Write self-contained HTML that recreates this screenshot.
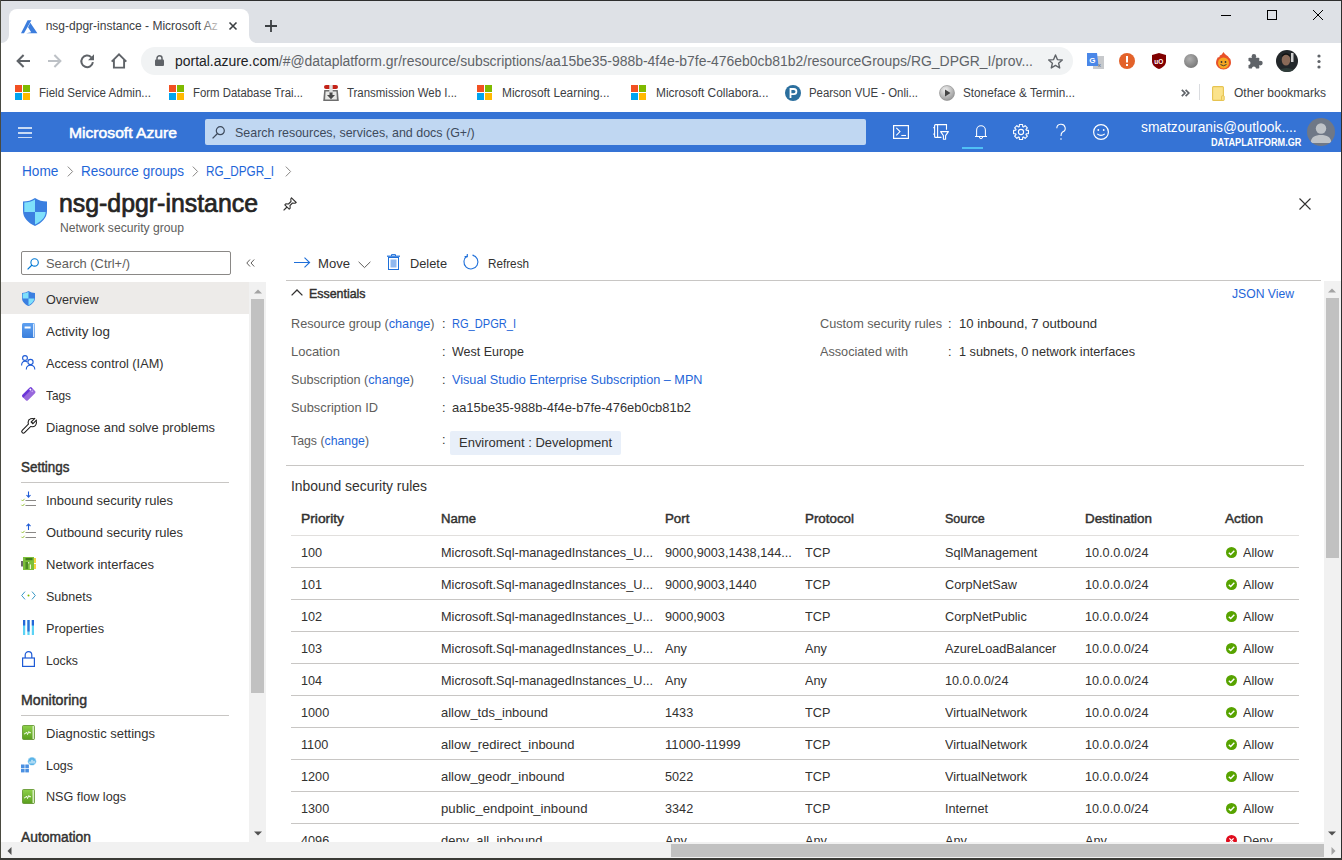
<!DOCTYPE html>
<html><head><meta charset="utf-8"><title>nsg-dpgr-instance - Microsoft Azure</title>
<style>
html,body{margin:0;padding:0;width:1342px;height:860px;overflow:hidden;background:#fff;}
body{position:relative;font-family:"Liberation Sans",sans-serif;}
.t{position:absolute;white-space:nowrap;}
.r{position:absolute;}
svg.r{overflow:visible;}
</style></head><body>
<div class="r" style="left:0px;top:0px;width:1342px;height:43px;background:#dee1e6;"></div>
<div class="r" style="left:9px;top:9px;width:240px;height:34px;background:#fff;border-radius:8px 8px 0 0;"></div>
<svg class="r" style="left:1px;top:35px" width="8" height="8" viewBox="0 0 8 8"><path d="M8 0 V8 H0 A8 8 0 0 0 8 0 Z" fill="#fff"/></svg>
<svg class="r" style="left:249px;top:35px" width="8" height="8" viewBox="0 0 8 8"><path d="M0 0 V8 H8 A8 8 0 0 1 0 0 Z" fill="#fff"/></svg>
<svg class="r" style="left:21px;top:20px" width="17" height="14" viewBox="0 0 17 14"><path d="M6.6 0.2 H10.4 L3 13.2 H0 Z" fill="#3b7ddd"/><path d="M9.3 2.8 L16.4 13.2 H5.2 L10.2 12.2 L7 7.2 Z" fill="#3b7ddd"/></svg>
<div class="t" style="left:45.7px;top:19.84px;font-size:12px;line-height:12px;color:#3c4043;">nsg-dpgr-instance - Microsoft Az</div>
<div class="r" style="left:200px;top:18px;width:24px;height:16px;background:linear-gradient(90deg,rgba(255,255,255,0),#fff);"></div>
<svg class="r" style="left:229px;top:22px" width="8" height="8" viewBox="0 0 8 8"><path d="M0.5 0.5 L7.5 7.5 M7.5 0.5 L0.5 7.5" stroke="#3c4043" stroke-width="1.6"/></svg>
<svg class="r" style="left:265px;top:20px" width="12" height="12" viewBox="0 0 12 12"><path d="M6 0 V12 M0 6 H12" stroke="#3c4043" stroke-width="1.8"/></svg>
<div class="r" style="left:1221px;top:15px;width:10px;height:1px;background:#000;"></div>
<div class="r" style="left:1267px;top:10px;width:10px;height:10px;background:transparent;border:1px solid #000;box-sizing:border-box;"></div>
<svg class="r" style="left:1313px;top:10px" width="10" height="10" viewBox="0 0 10 10"><path d="M0 0 L10 10 M10 0 L0 10" stroke="#000" stroke-width="1"/></svg>
<div class="r" style="left:0px;top:43px;width:1342px;height:69px;background:#fff;"></div>
<svg class="r" style="left:16px;top:54px" width="14" height="14" viewBox="0 0 14 14"><path d="M14 7 H1.8 M7.6 1 L1.6 7 L7.6 13" stroke="#5f6368" stroke-width="2" fill="none"/></svg>
<svg class="r" style="left:48px;top:54px" width="14" height="14" viewBox="0 0 14 14"><path d="M0 7 H12.2 M6.4 1 L12.4 7 L6.4 13" stroke="#bdc1c6" stroke-width="2" fill="none"/></svg>
<svg class="r" style="left:80px;top:54px" width="15" height="15" viewBox="0 0 15 15"><path d="M11.2 3.2 A5.8 5.8 0 1 0 12.9 8.2" stroke="#5f6368" stroke-width="2" fill="none"/><path d="M14 0.2 V6.2 H8 Z" fill="#5f6368"/></svg>
<svg class="r" style="left:111px;top:53px" width="16" height="16" viewBox="0 0 16 16"><path d="M2.9 6.8 V14.6 H13.1 V6.8" stroke="#5f6368" stroke-width="1.9" fill="none"/><path d="M0.7 8.6 L8 1.3 L15.3 8.6" stroke="#5f6368" stroke-width="1.9" fill="none"/></svg>
<div class="r" style="left:141px;top:47px;width:932px;height:28px;background:#f1f3f4;border-radius:14px;"></div>
<svg class="r" style="left:155px;top:55px" width="9" height="11" viewBox="0 0 9 11"><rect x="0" y="4.5" width="9" height="6.5" rx="1" fill="#5f6368"/><path d="M2 5 V3.2 A2.5 2.5 0 0 1 7 3.2 V5" stroke="#5f6368" stroke-width="1.5" fill="none"/></svg>
<div class="t" style="left:175.3px;top:54.35px;font-size:14px;line-height:14px;color:#5f6368;transform:scaleX(0.9951);transform-origin:0 0;"><span style="color:#202124">portal.azure.com</span>/#@dataplatform.gr/resource/subscriptions/aa15be35-988b-4f4e-b7fe-476eb0cb81b2/resourceGroups/RG_DPGR_I/prov...</div>
<svg class="r" style="left:1048px;top:54px" width="15" height="15" viewBox="0 0 15 15"><path d="M7.5 1 L9.4 5.6 L14.3 6 L10.6 9.2 L11.7 14 L7.5 11.4 L3.3 14 L4.4 9.2 L0.7 6 L5.6 5.6 Z" stroke="#5f6368" stroke-width="1.4" fill="none" stroke-linejoin="round"/></svg>
<svg class="r" style="left:1087px;top:53px" width="17" height="16" viewBox="0 0 17 16"><rect x="6" y="3" width="11" height="13" fill="#c7c9cc"/><path d="M0 0 H10 L11.5 13 H0 Z" fill="#4a87e8"/><text x="2.2" y="9.5" font-size="8" font-family="Liberation Sans" font-weight="bold" fill="#fff">G</text><text x="11" y="14" font-size="6" font-family="Liberation Sans" fill="#5f6368">x</text></svg>
<svg class="r" style="left:1119px;top:53px" width="16" height="16" viewBox="0 0 16 16"><circle cx="8" cy="8" r="8" fill="#e3622a"/><rect x="7" y="3" width="2" height="6.5" fill="#fff"/><rect x="7" y="11" width="2" height="2" fill="#fff"/></svg>
<svg class="r" style="left:1152px;top:53px" width="14" height="16" viewBox="0 0 14 16"><path d="M7 0 L14 2 V8 C14 12 11 14.5 7 16 C3 14.5 0 12 0 8 V2 Z" fill="#800000"/><text x="2.3" y="10.5" font-size="6.5" font-family="Liberation Sans" font-weight="bold" fill="#fff">uO</text></svg>
<svg class="r" style="left:1184px;top:54px" width="14" height="14" viewBox="0 0 14 14"><defs><radialGradient id="gg" cx="40%" cy="35%" r="65%"><stop offset="0" stop-color="#b0b0b0"/><stop offset="1" stop-color="#7a7a7a"/></radialGradient></defs><circle cx="7" cy="7" r="7" fill="url(#gg)"/></svg>
<svg class="r" style="left:1216px;top:52px" width="15" height="17" viewBox="0 0 15 17"><path d="M7.5 0 C9 3 13 4 13 6 C14.5 6 15 9 15 11 A7.5 6.5 0 0 1 0 11 C0 8 1.5 6 2 5 C3 6 3.5 5 4 3 C5 4 6 2 7.5 0 Z" fill="#e8512a"/><circle cx="7.5" cy="11" r="5.5" fill="#f6a723"/><circle cx="5.5" cy="10" r="0.9" fill="#333"/><circle cx="9.5" cy="10" r="0.9" fill="#333"/><path d="M4.5 12.5 Q7.5 15 10.5 12.5" stroke="#333" stroke-width="0.9" fill="none"/></svg>
<svg class="r" style="left:1248px;top:54px" width="15" height="15" viewBox="0 0 15 15"><rect x="0.5" y="3.8" width="10.8" height="10.7" rx="0.8" fill="#5f6368"/><circle cx="5.9" cy="2.4" r="2.3" fill="#5f6368"/><circle cx="12.4" cy="9.1" r="2.3" fill="#5f6368"/><circle cx="0.5" cy="9.1" r="2" fill="#fff"/><circle cx="5.9" cy="14.6" r="2" fill="#fff"/></svg>
<svg class="r" style="left:1276px;top:50px" width="22" height="22" viewBox="0 0 22 22"><defs><clipPath id="avc"><circle cx="11" cy="11" r="11"/></clipPath></defs><g clip-path="url(#avc)"><rect width="22" height="22" fill="#23272a"/><ellipse cx="10" cy="10" rx="4.3" ry="5.6" fill="#8a6a58"/><path d="M5.5 7 Q10 2 14.5 7 L14 5 Q10 1.5 6 5 Z" fill="#111"/><rect x="15" y="3" width="2.5" height="9" fill="#cfcfcf"/><path d="M1 22 Q10 14 21 22 Z" fill="#2f3d3a"/></g></svg>
<svg class="r" style="left:1317px;top:54px" width="4" height="15" viewBox="0 0 4 15"><circle cx="2" cy="2" r="1.6" fill="#5f6368"/><circle cx="2" cy="7.5" r="1.6" fill="#5f6368"/><circle cx="2" cy="13" r="1.6" fill="#5f6368"/></svg>
<svg class="r" style="left:15px;top:85px" width="15" height="15" viewBox="0 0 15 15"><rect x="0" y="0" width="7" height="7" fill="#f25022"/><rect x="8" y="0" width="7" height="7" fill="#7fba00"/><rect x="0" y="8" width="7" height="7" fill="#00a4ef"/><rect x="8" y="8" width="7" height="7" fill="#ffb900"/></svg>
<div class="t" style="left:39px;top:86.84px;font-size:12px;line-height:12px;color:#3c4043;transform:scaleX(0.9651);transform-origin:0 0;">Field Service Admin...</div>
<svg class="r" style="left:169px;top:85px" width="15" height="15" viewBox="0 0 15 15"><rect x="0" y="0" width="7" height="7" fill="#f25022"/><rect x="8" y="0" width="7" height="7" fill="#7fba00"/><rect x="0" y="8" width="7" height="7" fill="#00a4ef"/><rect x="8" y="8" width="7" height="7" fill="#ffb900"/></svg>
<div class="t" style="left:193px;top:86.84px;font-size:12px;line-height:12px;color:#3c4043;transform:scaleX(0.9479);transform-origin:0 0;">Form Database Trai...</div>
<svg class="r" style="left:323px;top:85px" width="16" height="16" viewBox="0 0 16 16"><path d="M1.2 5 H14.8 L15.8 16 H0.2 Z" fill="#6e6e6e"/><path d="M2.6 6.6 H13.4 L13.9 14.4 H2.1 Z" fill="#e8e8e6"/><path d="M6.5 7 H9.5 V10 H12 L8 14.2 L4 10 H6.5 Z" fill="#4a4a4a"/><rect x="1" y="0" width="14" height="4" rx="2" fill="#c42318"/><rect x="6.3" y="0" width="3.4" height="7.5" fill="#e0e0e0"/></svg>
<div class="t" style="left:347px;top:86.84px;font-size:12px;line-height:12px;color:#3c4043;transform:scaleX(0.9534);transform-origin:0 0;">Transmission Web I...</div>
<svg class="r" style="left:477px;top:85px" width="15" height="15" viewBox="0 0 15 15"><rect x="0" y="0" width="7" height="7" fill="#f25022"/><rect x="8" y="0" width="7" height="7" fill="#7fba00"/><rect x="0" y="8" width="7" height="7" fill="#00a4ef"/><rect x="8" y="8" width="7" height="7" fill="#ffb900"/></svg>
<div class="t" style="left:501.5px;top:86.84px;font-size:12px;line-height:12px;color:#3c4043;transform:scaleX(0.9888);transform-origin:0 0;">Microsoft Learning...</div>
<svg class="r" style="left:631px;top:85px" width="15" height="15" viewBox="0 0 15 15"><rect x="0" y="0" width="7" height="7" fill="#f25022"/><rect x="8" y="0" width="7" height="7" fill="#7fba00"/><rect x="0" y="8" width="7" height="7" fill="#00a4ef"/><rect x="8" y="8" width="7" height="7" fill="#ffb900"/></svg>
<div class="t" style="left:655.5px;top:86.84px;font-size:12px;line-height:12px;color:#3c4043;transform:scaleX(0.9923);transform-origin:0 0;">Microsoft Collabora...</div>
<svg class="r" style="left:785px;top:85px" width="16" height="16" viewBox="0 0 16 16"><circle cx="8" cy="8" r="8" fill="#2b6f9e"/><path d="M5.5 13 V4 H8.8 A2.6 2.6 0 0 1 8.8 9.2 H5.5" stroke="#fff" stroke-width="1.8" fill="none"/></svg>
<div class="t" style="left:809px;top:86.84px;font-size:12px;line-height:12px;color:#3c4043;transform:scaleX(0.9501);transform-origin:0 0;">Pearson VUE - Onli...</div>
<svg class="r" style="left:939px;top:85px" width="16" height="16" viewBox="0 0 16 16"><defs><radialGradient id="sg" cx="40%" cy="30%" r="70%"><stop offset="0" stop-color="#f0f0f0"/><stop offset="1" stop-color="#9a9a9a"/></radialGradient></defs><circle cx="8" cy="8" r="7.5" fill="url(#sg)" stroke="#8a8a8a" stroke-width="0.6"/><path d="M6 4.5 L11.5 8 L6 11.5 Z" fill="#444"/></svg>
<div class="t" style="left:963px;top:86.84px;font-size:12px;line-height:12px;color:#3c4043;transform:scaleX(0.9780);transform-origin:0 0;">Stoneface &amp; Termin...</div>
<svg class="r" style="left:1181px;top:89px" width="9" height="8" viewBox="0 0 9 8"><path d="M0.8 0.8 L4 4 L0.8 7.2 M4.6 0.8 L7.8 4 L4.6 7.2" stroke="#5f6368" stroke-width="1.7" fill="none"/></svg>
<div class="r" style="left:1199px;top:84px;width:1px;height:16px;background:#dadce0;"></div>
<svg class="r" style="left:1212px;top:86px" width="13" height="15" viewBox="0 0 13 15"><rect x="0.6" y="0.6" width="10.8" height="13.8" rx="1" fill="#fbe38b" stroke="#e6c350" stroke-width="1.1"/><rect x="9.6" y="9.8" width="2.6" height="4.6" rx="0.6" fill="#fbe38b" stroke="#e6c350" stroke-width="1"/></svg>
<div class="t" style="left:1234px;top:86.84px;font-size:12px;line-height:12px;color:#3c4043;">Other bookmarks</div>
<div class="r" style="left:1px;top:112px;width:1340px;height:40px;background:#3573d5;"></div>
<div class="r" style="left:18px;top:127px;width:14px;height:1.5px;background:#c9dbf4;"></div>
<div class="r" style="left:18px;top:132px;width:14px;height:1.5px;background:#c9dbf4;"></div>
<div class="r" style="left:18px;top:136.5px;width:14px;height:1.5px;background:#c9dbf4;"></div>
<div class="t" style="left:69px;top:125.10px;font-size:15px;line-height:15px;color:#fff;-webkit-text-stroke:0.55px #fff;transform:scaleX(1.0447);transform-origin:0 0;">Microsoft Azure</div>
<div class="r" style="left:205px;top:119px;width:661px;height:26px;background:#c0d7f2;border-radius:2px;"></div>
<svg class="r" style="left:212px;top:126px" width="13" height="13" viewBox="0 0 13 13"><circle cx="8.3" cy="4.7" r="4" stroke="#3d4a5c" stroke-width="1.2" fill="none"/><path d="M5.5 7.5 L0.6 12.4" stroke="#3d4a5c" stroke-width="1.3"/></svg>
<div class="t" style="left:234.8px;top:126.00px;font-size:13px;line-height:13px;color:#3d4a5c;transform:scaleX(0.9574);transform-origin:0 0;">Search resources, services, and docs (G+/)</div>
<svg class="r" style="left:893px;top:125px" width="16" height="14" viewBox="0 0 16 14"><rect x="0.6" y="0.6" width="14.8" height="12.8" stroke="#fff" stroke-width="1.2" fill="none"/><path d="M3.3 2.8 L7 6.6 L3.3 10.4" stroke="#fff" stroke-width="1.1" fill="none"/><path d="M8.3 10.5 H13" stroke="#fff" stroke-width="1.1"/></svg>
<svg class="r" style="left:933px;top:124px" width="16" height="16" viewBox="0 0 16 16"><path d="M8.5 13.4 H2.6 Q1.6 13.4 1.6 12.4 V1.6 Q1.6 0.6 2.6 0.6 H13.5 V5.8" stroke="#fff" stroke-width="1.1" fill="none"/><path d="M4.6 0.6 V13.4" stroke="#fff" stroke-width="1.1"/><path d="M0.3 3.6 H2 M0.3 10.2 H2" stroke="#fff" stroke-width="1.3"/><path d="M7.6 7.6 H15.4 L12.6 11.6 V15.3 H10.4 V11.6 Z" stroke="#fff" stroke-width="1.1" fill="none" stroke-linejoin="round"/></svg>
<svg class="r" style="left:975px;top:125px" width="12" height="14" viewBox="0 0 12 14"><path d="M1.6 11 V5.2 A4.4 4.5 0 0 1 10.4 5.2 V11" stroke="#fff" stroke-width="1.05" fill="none"/><path d="M0 11.5 H12" stroke="#fff" stroke-width="1.05"/><path d="M4.4 12 A1.6 1.6 0 0 0 7.6 12" stroke="#fff" stroke-width="1" fill="none"/></svg>
<div class="r" style="left:962px;top:147px;width:21px;height:2px;background:#50c0f5;"></div>
<svg class="r" style="left:1013px;top:124px" width="16" height="16" viewBox="0 0 16 16"><g transform="translate(8,8)"><path d="M7.43 -1.58 L7.43 1.58 L5.33 1.73 L4.99 2.54 L6.37 4.14 L4.14 6.37 L2.54 4.99 L1.73 5.33 L1.58 7.43 L-1.58 7.43 L-1.73 5.33 L-2.54 4.99 L-4.14 6.37 L-6.37 4.14 L-4.99 2.54 L-5.33 1.73 L-7.43 1.58 L-7.43 -1.58 L-5.33 -1.73 L-4.99 -2.54 L-6.37 -4.14 L-4.14 -6.37 L-2.54 -4.99 L-1.73 -5.33 L-1.58 -7.43 L1.58 -7.43 L1.73 -5.33 L2.54 -4.99 L4.14 -6.37 L6.37 -4.14 L4.99 -2.54 L5.33 -1.73 Z" stroke="#fff" stroke-width="1.1" fill="none" stroke-linejoin="round"/><circle r="2.6" stroke="#fff" stroke-width="1.1" fill="none"/></g></svg>
<svg class="r" style="left:1056px;top:124px" width="10" height="16" viewBox="0 0 10 16"><path d="M0.8 4.2 A4.2 4 0 1 1 6.5 8 C5.2 9 5 10 5 12" stroke="#fff" stroke-width="1.1" fill="none"/><circle cx="5" cy="15" r="0.8" fill="#fff"/></svg>
<svg class="r" style="left:1093px;top:124px" width="16" height="16" viewBox="0 0 16 16"><circle cx="8" cy="8" r="7.4" stroke="#fff" stroke-width="1.2" fill="none"/><circle cx="5.3" cy="6" r="0.9" fill="#fff"/><circle cx="10.7" cy="6" r="0.9" fill="#fff"/><path d="M4.2 9.8 Q8 13 11.8 9.8" stroke="#fff" stroke-width="1.1" fill="none"/></svg>
<div class="t" style="left:1141px;top:119.85px;font-size:14px;line-height:14px;color:#fff;transform:scaleX(0.9844);transform-origin:0 0;">smatzouranis@outlook....</div>
<div class="t" style="left:1210.6px;top:137.53px;font-size:10px;line-height:10px;color:#fff;font-weight:bold;transform:scaleX(0.9143);transform-origin:0 0;">DATAPLATFORM.GR</div>
<svg class="r" style="left:1307px;top:118px" width="28" height="28" viewBox="0 0 28 28"><defs><clipPath id="avp"><circle cx="14" cy="14" r="14"/></clipPath></defs><circle cx="14" cy="14" r="14" fill="#6f7887"/><g clip-path="url(#avp)"><circle cx="14" cy="10.5" r="5.2" fill="#bfc3c8"/><path d="M3.5 25 C4 19 8 17 14 17 C20 17 24 19 24.5 25 Z" fill="#bfc3c8"/></g></svg>
<div class="t" style="left:21.6px;top:164.35px;font-size:14px;line-height:14px;color:#1f66d8;transform:scaleX(0.9743);transform-origin:0 0;">Home</div>
<svg class="r" style="left:67px;top:166px" width="7" height="11" viewBox="0 0 7 11"><path d="M0.8 0.6 L5.6 5.5 L0.8 10.4" stroke="#8a8886" stroke-width="1" fill="none"/></svg>
<div class="t" style="left:81px;top:164.35px;font-size:14px;line-height:14px;color:#1f66d8;transform:scaleX(0.9660);transform-origin:0 0;">Resource groups</div>
<svg class="r" style="left:192px;top:166px" width="7" height="11" viewBox="0 0 7 11"><path d="M0.8 0.6 L5.6 5.5 L0.8 10.4" stroke="#8a8886" stroke-width="1" fill="none"/></svg>
<div class="t" style="left:206px;top:164.35px;font-size:14px;line-height:14px;color:#1f66d8;transform:scaleX(0.8403);transform-origin:0 0;">RG_DPGR_I</div>
<svg class="r" style="left:285px;top:166px" width="7" height="11" viewBox="0 0 7 11"><path d="M0.8 0.6 L5.6 5.5 L0.8 10.4" stroke="#8a8886" stroke-width="1" fill="none"/></svg>
<svg class="r" style="left:23px;top:198px" width="24" height="28" viewBox="0 0 24 28"><path d="M12 0 C15.5 2.5 19.5 3.5 24 3.5 V13 C24 20 18.5 25 12 28 C5.5 25 0 20 0 13 V3.5 C4.5 3.5 8.5 2.5 12 0 Z" fill="#3b7fe0"/><path d="M12 1.5 V14 H1.3 V4.6 C5.3 4.4 9 3.5 12 1.5 Z" fill="#7fe0fb"/><path d="M12 14 H22.7 C22.2 20 17.5 24 12 26.5 Z" fill="#7fe0fb"/></svg>
<div class="t" style="left:59px;top:190.84px;font-size:25px;line-height:25px;color:#252423;-webkit-text-stroke:0.7px #252423;transform:scaleX(0.9944);transform-origin:0 0;">nsg-dpgr-instance</div>
<svg class="r" style="left:283px;top:197px" width="14" height="14" viewBox="0 0 14 14"><path d="M8.5 0.8 L13.2 5.5 L12 6.2 L9.5 6 L7 8.5 L7.2 11.2 L6.2 12.2 L1.8 7.8 L2.8 6.8 L5.5 7 L8 4.5 L7.8 2 Z" stroke="#323130" stroke-width="1.1" fill="none" stroke-linejoin="round"/><path d="M4 10 L0.6 13.4" stroke="#323130" stroke-width="1.2"/></svg>
<div class="t" style="left:59.5px;top:222.04px;font-size:12px;line-height:12px;color:#605e5c;transform:scaleX(1.0104);transform-origin:0 0;">Network security group</div>
<svg class="r" style="left:1299px;top:198px" width="12" height="12" viewBox="0 0 12 12"><path d="M0.5 0.5 L11.5 11.5 M11.5 0.5 L0.5 11.5" stroke="#323130" stroke-width="1.1"/></svg>
<div class="r" style="left:21px;top:251px;width:210px;height:24px;background:#fff;border:1px solid #8a8886;box-sizing:border-box;border-radius:2px;"></div>
<svg class="r" style="left:27px;top:258px" width="12" height="12" viewBox="0 0 12 12"><circle cx="7.6" cy="4.4" r="3.7" stroke="#0078d4" stroke-width="1.1" fill="none"/><path d="M5 7 L0.6 11.4" stroke="#0078d4" stroke-width="1.2"/></svg>
<div class="t" style="left:46px;top:257.00px;font-size:13px;line-height:13px;color:#605e5c;transform:scaleX(0.9895);transform-origin:0 0;">Search (Ctrl+/)</div>
<svg class="r" style="left:246px;top:259px" width="9" height="8" viewBox="0 0 9 8"><path d="M4 0.5 L0.8 4 L4 7.5 M8.2 0.5 L5 4 L8.2 7.5" stroke="#605e5c" stroke-width="1" fill="none"/></svg>
<div class="r" style="left:1px;top:282px;width:248px;height:32px;background:#edebe9;"></div>
<div class="t" style="left:46px;top:293.00px;font-size:13px;line-height:13px;color:#323130;transform:scaleX(0.9689);transform-origin:0 0;">Overview</div>
<svg class="r" style="left:22px;top:291px" width="13" height="15" viewBox="0 0 13 15"><path d="M6.5 0 C8.4 1.3 10.6 1.9 13 1.9 V7 C13 10.8 10 13.5 6.5 15 C3 13.5 0 10.8 0 7 V1.9 C2.4 1.9 4.6 1.3 6.5 0 Z" fill="#3b7fe0"/><path d="M6.5 0.8 V7.5 H0.7 V2.5 C2.9 2.4 4.9 1.9 6.5 0.8 Z" fill="#7fe0fb"/><path d="M6.5 7.5 H12.3 C12 10.8 9.5 12.9 6.5 14.2 Z" fill="#7fe0fb"/></svg>
<div class="t" style="left:46px;top:325.00px;font-size:13px;line-height:13px;color:#323130;transform:scaleX(1.0299);transform-origin:0 0;">Activity log</div>
<svg class="r" style="left:22px;top:323px" width="14" height="15" viewBox="0 0 14 15"><defs><linearGradient id="bk" x1="0" y1="0" x2="0" y2="1"><stop offset="0" stop-color="#5ea0f0"/><stop offset="1" stop-color="#3a7fdc"/></linearGradient></defs><rect x="0" y="0" width="13" height="15" rx="1.5" fill="url(#bk)"/><rect x="11" y="0.8" width="1.4" height="13.4" fill="#d9e8fb"/><rect x="2.6" y="3.5" width="6" height="2" fill="#fff"/></svg>
<div class="t" style="left:46px;top:357.00px;font-size:13px;line-height:13px;color:#323130;transform:scaleX(0.9798);transform-origin:0 0;">Access control (IAM)</div>
<svg class="r" style="left:21px;top:355px" width="15" height="15" viewBox="0 0 15 15"><circle cx="4" cy="3" r="2.4" stroke="#1e5bd6" stroke-width="1.1" fill="none"/><path d="M0.6 10.5 C0.6 7.5 2 6.2 4 6.2 C5 6.2 5.8 6.5 6.3 7" stroke="#1e5bd6" stroke-width="1.1" fill="none"/><circle cx="9.5" cy="7" r="2.6" stroke="#1e5bd6" stroke-width="1.1" fill="none"/><path d="M5.3 14.5 C5.3 11.5 7 10.2 9.5 10.2 C12 10.2 13.8 11.5 13.8 14.5" stroke="#1e5bd6" stroke-width="1.1" fill="none"/></svg>
<div class="t" style="left:46px;top:389.00px;font-size:13px;line-height:13px;color:#323130;transform:scaleX(0.9101);transform-origin:0 0;">Tags</div>
<svg class="r" style="left:21px;top:386px" width="15" height="16" viewBox="0 0 15 16"><g transform="translate(7.8 8) scale(0.87) rotate(-45) translate(-7.5 -8)"><rect x="0" y="3.6" width="15" height="8.8" rx="1.8" fill="#9868dc"/><path d="M1.8 3.6 H13.2 A1.8 1.8 0 0 1 15 5.4 V6.4 H0 V5.4 A1.8 1.8 0 0 1 1.8 3.6 Z" fill="#6a35d8"/><circle cx="12.4" cy="5.6" r="1.05" fill="#fff"/><rect x="11.6" y="8" width="1.8" height="1.3" fill="#c9b0f0"/></g></svg>
<div class="t" style="left:46px;top:421.00px;font-size:13px;line-height:13px;color:#323130;transform:scaleX(0.9867);transform-origin:0 0;">Diagnose and solve problems</div>
<svg class="r" style="left:16px;top:414px" width="26" height="26" viewBox="0 0 26 26"><circle cx="16.3" cy="8.6" r="4.7" fill="#1b1a19"/><path d="M13.6 11.3 L7.4 17.5" stroke="#1b1a19" stroke-width="4.4" stroke-linecap="round"/><circle cx="16.3" cy="8.6" r="3.6" fill="#fff"/><path d="M14 10.9 L7.4 17.5" stroke="#fff" stroke-width="2.2" stroke-linecap="round"/><path d="M15.6 9.3 L19.9 5" stroke="#1b1a19" stroke-width="3.4"/><path d="M16.6 8.3 L20.8 4.1" stroke="#fff" stroke-width="1.3"/></svg>
<div class="t" style="left:21px;top:459.75px;font-size:14px;line-height:14px;color:#323130;-webkit-text-stroke:0.45px #323130;transform:scaleX(0.9586);transform-origin:0 0;">Settings</div>
<div class="r" style="left:21px;top:482px;width:208px;height:1px;background:#c8c6c4;"></div>
<div class="t" style="left:46px;top:493.80px;font-size:13px;line-height:13px;color:#323130;transform:scaleX(0.9985);transform-origin:0 0;">Inbound security rules</div>
<svg class="r" style="left:21px;top:491px" width="16" height="17" viewBox="0 0 16 17"><path d="M7.5 0.5 V6 M5.5 4 L7.5 6.2 L9.5 4" stroke="#1e5bd6" stroke-width="1.1" fill="none"/><path d="M4.5 9.5 H15 M4.5 14.5 H15" stroke="#8a8886" stroke-width="1.2"/><path d="M0.5 8.8 L1.6 10 L3.6 7.8 M0.5 13.8 L1.6 15 L3.6 12.8" stroke="#9bc53d" stroke-width="1" fill="none"/></svg>
<div class="t" style="left:46px;top:525.80px;font-size:13px;line-height:13px;color:#323130;transform:scaleX(0.9978);transform-origin:0 0;">Outbound security rules</div>
<svg class="r" style="left:21px;top:523px" width="16" height="17" viewBox="0 0 16 17"><path d="M7.5 7 V1.2 M5.5 3.2 L7.5 1 L9.5 3.2" stroke="#1e5bd6" stroke-width="1.1" fill="none"/><path d="M4.5 9.5 H15 M4.5 14.5 H15" stroke="#8a8886" stroke-width="1.2"/><path d="M0.5 8.8 L1.6 10 L3.6 7.8 M0.5 13.8 L1.6 15 L3.6 12.8" stroke="#9bc53d" stroke-width="1" fill="none"/></svg>
<div class="t" style="left:46px;top:557.80px;font-size:13px;line-height:13px;color:#323130;transform:scaleX(1.0032);transform-origin:0 0;">Network interfaces</div>
<svg class="r" style="left:21px;top:557px" width="15" height="13" viewBox="0 0 15 13"><rect x="0" y="4" width="2.2" height="5.5" fill="#6b6b6b"/><rect x="2" y="0" width="11" height="13" fill="#7cbf3a"/><rect x="4.5" y="1" width="7" height="2.2" fill="#3f7a1c"/><rect x="4.5" y="5" width="2.5" height="7" fill="#4c8a24"/><rect x="8.8" y="7.5" width="1.2" height="4.5" fill="#e6f2d8"/><rect x="7" y="5" width="1.2" height="1.5" fill="#d8ecc4"/><rect x="13" y="1" width="2" height="5" fill="#f5d442"/><rect x="13" y="7" width="2" height="5" fill="#f5d442"/></svg>
<div class="t" style="left:46px;top:589.80px;font-size:13px;line-height:13px;color:#323130;transform:scaleX(0.9643);transform-origin:0 0;">Subnets</div>
<svg class="r" style="left:21px;top:591px" width="15" height="9" viewBox="0 0 15 9"><path d="M4 0.6 L0.7 4.5 L4 8.4 M11 0.6 L14.3 4.5 L11 8.4" stroke="#3999c6" stroke-width="1" fill="none"/><circle cx="7.5" cy="4.5" r="1" fill="#7fba00"/></svg>
<div class="t" style="left:46px;top:621.80px;font-size:13px;line-height:13px;color:#323130;transform:scaleX(0.9789);transform-origin:0 0;">Properties</div>
<svg class="r" style="left:22px;top:620px" width="13" height="15" viewBox="0 0 13 15"><rect x="1" y="0" width="2.2" height="15" fill="#5cd3f5"/><rect x="1" y="0" width="2.2" height="5.5" fill="#2567d8"/><rect x="5.4" y="0" width="2.2" height="15" fill="#5cd3f5"/><rect x="5.4" y="0" width="2.2" height="11.5" fill="#2f6fd6"/><rect x="9.8" y="0" width="2.2" height="15" fill="#5cd3f5"/><rect x="9.8" y="0" width="2.2" height="5.5" fill="#2567d8"/></svg>
<div class="t" style="left:46px;top:653.80px;font-size:13px;line-height:13px;color:#323130;transform:scaleX(0.9420);transform-origin:0 0;">Locks</div>
<svg class="r" style="left:22px;top:651px" width="13" height="16" viewBox="0 0 13 16"><path d="M3.2 7 V4 A3.3 3.3 0 0 1 9.8 4 V7" stroke="#1e5bd6" stroke-width="1.2" fill="none"/><rect x="0.6" y="7" width="11.8" height="8.4" stroke="#1e5bd6" stroke-width="1.2" fill="none"/></svg>
<div class="t" style="left:21px;top:692.85px;font-size:14px;line-height:14px;color:#323130;-webkit-text-stroke:0.45px #323130;transform:scaleX(1.0096);transform-origin:0 0;">Monitoring</div>
<div class="r" style="left:21px;top:715px;width:208px;height:1px;background:#c8c6c4;"></div>
<div class="t" style="left:46px;top:726.80px;font-size:13px;line-height:13px;color:#323130;transform:scaleX(0.9989);transform-origin:0 0;">Diagnostic settings</div>
<svg class="r" style="left:22px;top:725px" width="13" height="15" viewBox="0 0 13 15"><defs><linearGradient id="gb725" x1="0" y1="0" x2="0" y2="1"><stop offset="0" stop-color="#8ed14a"/><stop offset="1" stop-color="#5a9e1e"/></linearGradient></defs><rect x="0.5" y="0.5" width="12" height="14" rx="1" fill="url(#gb725)" stroke="#5d8f2a" stroke-width="0.8"/><rect x="10.5" y="1" width="1.6" height="13" fill="#d6ecc0"/><path d="M2 9 L3.5 8.5 L4.5 7 L5.5 9.5 L6.8 6.5 L7.8 8 L9 7.5" stroke="#fff" stroke-width="0.9" fill="none"/></svg>
<div class="t" style="left:46px;top:758.70px;font-size:13px;line-height:13px;color:#323130;transform:scaleX(0.9573);transform-origin:0 0;">Logs</div>
<svg class="r" style="left:21px;top:757px" width="15" height="16" viewBox="0 0 15 16"><rect x="0" y="7.5" width="3.6" height="3.6" fill="#4a90e2"/><rect x="4.3" y="7.5" width="3.6" height="3.6" fill="#4a90e2"/><rect x="0" y="11.8" width="3.6" height="3.6" fill="#4a90e2"/><rect x="4.3" y="11.8" width="3.6" height="3.6" fill="#4a90e2"/><circle cx="11" cy="4.3" r="4.3" fill="#5ab4e8" stroke="#fff" stroke-width="0.6"/><path d="M9 6.5 V4.5 M11 6.5 V2.8 M13 6.5 V3.8" stroke="#fff" stroke-width="1"/></svg>
<div class="t" style="left:46px;top:790.40px;font-size:13px;line-height:13px;color:#323130;transform:scaleX(0.9712);transform-origin:0 0;">NSG flow logs</div>
<svg class="r" style="left:22px;top:789px" width="13" height="15" viewBox="0 0 13 15"><defs><linearGradient id="gb789" x1="0" y1="0" x2="0" y2="1"><stop offset="0" stop-color="#8ed14a"/><stop offset="1" stop-color="#5a9e1e"/></linearGradient></defs><rect x="0.5" y="0.5" width="12" height="14" rx="1" fill="url(#gb789)" stroke="#5d8f2a" stroke-width="0.8"/><rect x="10.5" y="1" width="1.6" height="13" fill="#d6ecc0"/><path d="M2 9 L3.5 8.5 L4.5 7 L5.5 9.5 L6.8 6.5 L7.8 8 L9 7.5" stroke="#fff" stroke-width="0.9" fill="none"/></svg>
<div class="t" style="left:21px;top:829.65px;font-size:14px;line-height:14px;color:#323130;-webkit-text-stroke:0.45px #323130;transform:scaleX(0.9883);transform-origin:0 0;">Automation</div>
<div class="r" style="left:249px;top:282px;width:17px;height:560px;background:#f1f1f1;"></div>
<div class="r" style="left:251px;top:299px;width:13px;height:394px;background:#c1c1c1;"></div>
<svg class="r" style="left:254px;top:289px" width="8" height="5" viewBox="0 0 8 5"><path d="M0 4.5 L4 0.5 L8 4.5 Z" fill="#a3a3a3"/></svg>
<svg class="r" style="left:254px;top:830.5px" width="8" height="5" viewBox="0 0 8 5"><path d="M0 0.5 L4 4.5 L8 0.5 Z" fill="#505050"/></svg>
<svg class="r" style="left:294px;top:257px" width="17" height="11" viewBox="0 0 17 11"><path d="M0 5.5 H15.5 M10.5 0.6 L15.6 5.5 L10.5 10.4" stroke="#1e6fd9" stroke-width="1.1" fill="none"/></svg>
<div class="t" style="left:318px;top:257.00px;font-size:13px;line-height:13px;color:#323130;transform:scaleX(1.0064);transform-origin:0 0;">Move</div>
<svg class="r" style="left:358px;top:260.5px" width="13" height="8" viewBox="0 0 13 8"><path d="M0.6 0.8 L6.5 6.6 L12.4 0.8" stroke="#605e5c" stroke-width="1" fill="none"/></svg>
<svg class="r" style="left:387px;top:254px" width="13" height="16" viewBox="0 0 13 16"><path d="M4.5 2 V0.6 H8.5 V2" stroke="#1e6fd9" stroke-width="1" fill="none"/><path d="M0 2.2 H13" stroke="#1e6fd9" stroke-width="1.2"/><rect x="1.5" y="3.5" width="10" height="12" stroke="#1e6fd9" stroke-width="1" fill="none"/><rect x="3.5" y="5.5" width="6" height="8" fill="#8fb8ef"/></svg>
<div class="t" style="left:410px;top:257.00px;font-size:13px;line-height:13px;color:#323130;transform:scaleX(0.9846);transform-origin:0 0;">Delete</div>
<svg class="r" style="left:463px;top:254px" width="16" height="16" viewBox="0 0 16 16"><path d="M4.2 2 A7 7 0 1 0 9.5 1.1" stroke="#1e6fd9" stroke-width="1.1" fill="none"/><path d="M4.3 0 V2.6 H1.6" stroke="#1e6fd9" stroke-width="1.1" fill="none"/></svg>
<div class="t" style="left:488px;top:257.00px;font-size:13px;line-height:13px;color:#323130;transform:scaleX(0.9005);transform-origin:0 0;">Refresh</div>
<div class="r" style="left:286px;top:280px;width:1035px;height:1px;background:#c8c6c4;"></div>
<svg class="r" style="left:291px;top:289px" width="12" height="7" viewBox="0 0 12 7"><path d="M0.6 6.4 L6 1 L11.4 6.4" stroke="#323130" stroke-width="1.3" fill="none"/></svg>
<div class="t" style="left:309px;top:287.00px;font-size:13px;line-height:13px;color:#323130;-webkit-text-stroke:0.45px #323130;transform:scaleX(0.9536);transform-origin:0 0;">Essentials</div>
<div class="t" style="left:1232px;top:287.00px;font-size:13px;line-height:13px;color:#1f66d8;transform:scaleX(0.9361);transform-origin:0 0;">JSON View</div>
<div class="t" style="left:291.4px;top:317.00px;font-size:13px;line-height:13px;color:#605e5c;transform:scaleX(0.9732);transform-origin:0 0;">Resource group (<span style="color:#1f66d8">change</span>)</div>
<div class="t" style="left:442px;top:317.00px;font-size:13px;line-height:13px;color:#323130;transform:scaleX(0.9750);transform-origin:0 0;">:</div>
<div class="t" style="left:451.5px;top:317.00px;font-size:13px;line-height:13px;color:#1f66d8;transform:scaleX(0.8517);transform-origin:0 0;">RG_DPGR_I</div>
<div class="t" style="left:291.4px;top:345.00px;font-size:13px;line-height:13px;color:#605e5c;transform:scaleX(0.9968);transform-origin:0 0;">Location</div>
<div class="t" style="left:442px;top:345.00px;font-size:13px;line-height:13px;color:#323130;transform:scaleX(0.9750);transform-origin:0 0;">:</div>
<div class="t" style="left:451.5px;top:345.00px;font-size:13px;line-height:13px;color:#323130;transform:scaleX(0.9610);transform-origin:0 0;">West Europe</div>
<div class="t" style="left:291.4px;top:373.00px;font-size:13px;line-height:13px;color:#605e5c;transform:scaleX(0.9725);transform-origin:0 0;">Subscription (<span style="color:#1f66d8">change</span>)</div>
<div class="t" style="left:442px;top:373.00px;font-size:13px;line-height:13px;color:#323130;transform:scaleX(0.9750);transform-origin:0 0;">:</div>
<div class="t" style="left:451.5px;top:373.00px;font-size:13px;line-height:13px;color:#1f66d8;transform:scaleX(0.9747);transform-origin:0 0;">Visual Studio Enterprise Subscription – MPN</div>
<div class="t" style="left:291.4px;top:401.00px;font-size:13px;line-height:13px;color:#605e5c;transform:scaleX(0.9869);transform-origin:0 0;">Subscription ID</div>
<div class="t" style="left:442px;top:401.00px;font-size:13px;line-height:13px;color:#323130;transform:scaleX(0.9750);transform-origin:0 0;">:</div>
<div class="t" style="left:451.5px;top:401.00px;font-size:13px;line-height:13px;color:#323130;transform:scaleX(0.9929);transform-origin:0 0;">aa15be35-988b-4f4e-b7fe-476eb0cb81b2</div>
<div class="t" style="left:291.4px;top:434.00px;font-size:13px;line-height:13px;color:#605e5c;transform:scaleX(0.9465);transform-origin:0 0;">Tags (<span style="color:#1f66d8">change</span>)</div>
<div class="t" style="left:442px;top:433.00px;font-size:13px;line-height:13px;color:#323130;transform:scaleX(0.9750);transform-origin:0 0;">:</div>
<div class="r" style="left:450px;top:431px;width:171px;height:24px;background:#e8eff9;border-radius:2px;"></div>
<div class="t" style="left:459px;top:436.00px;font-size:13px;line-height:13px;color:#323130;transform:scaleX(0.9988);transform-origin:0 0;">Enviroment : Development</div>
<div class="t" style="left:820.4px;top:317.00px;font-size:13px;line-height:13px;color:#605e5c;transform:scaleX(0.9761);transform-origin:0 0;">Custom security rules</div>
<div class="t" style="left:948px;top:317.00px;font-size:13px;line-height:13px;color:#323130;transform:scaleX(0.9750);transform-origin:0 0;">:</div>
<div class="t" style="left:959px;top:317.00px;font-size:13px;line-height:13px;color:#323130;transform:scaleX(1.0099);transform-origin:0 0;">10 inbound, 7 outbound</div>
<div class="t" style="left:820.4px;top:345.00px;font-size:13px;line-height:13px;color:#605e5c;transform:scaleX(0.9742);transform-origin:0 0;">Associated with</div>
<div class="t" style="left:948px;top:345.00px;font-size:13px;line-height:13px;color:#323130;transform:scaleX(0.9750);transform-origin:0 0;">:</div>
<div class="t" style="left:959px;top:345.00px;font-size:13px;line-height:13px;color:#323130;transform:scaleX(0.9781);transform-origin:0 0;">1 subnets, 0 network interfaces</div>
<div class="r" style="left:286px;top:465px;width:1018px;height:1px;background:#c8c6c4;"></div>
<div class="t" style="left:291px;top:479.15px;font-size:14px;line-height:14px;color:#323130;transform:scaleX(0.9929);transform-origin:0 0;">Inbound security rules</div>
<div class="t" style="left:301px;top:512.00px;font-size:13px;line-height:13px;color:#323130;-webkit-text-stroke:0.45px #323130;transform:scaleX(1.0630);transform-origin:0 0;">Priority</div>
<div class="t" style="left:441px;top:512.00px;font-size:13px;line-height:13px;color:#323130;-webkit-text-stroke:0.45px #323130;transform:scaleX(1.0090);transform-origin:0 0;">Name</div>
<div class="t" style="left:665px;top:512.00px;font-size:13px;line-height:13px;color:#323130;-webkit-text-stroke:0.45px #323130;transform:scaleX(1.0233);transform-origin:0 0;">Port</div>
<div class="t" style="left:805px;top:512.00px;font-size:13px;line-height:13px;color:#323130;-webkit-text-stroke:0.45px #323130;transform:scaleX(1.0272);transform-origin:0 0;">Protocol</div>
<div class="t" style="left:945px;top:512.00px;font-size:13px;line-height:13px;color:#323130;-webkit-text-stroke:0.45px #323130;transform:scaleX(0.9611);transform-origin:0 0;">Source</div>
<div class="t" style="left:1085px;top:512.00px;font-size:13px;line-height:13px;color:#323130;-webkit-text-stroke:0.45px #323130;transform:scaleX(1.0300);transform-origin:0 0;">Destination</div>
<div class="t" style="left:1225px;top:512.00px;font-size:13px;line-height:13px;color:#323130;-webkit-text-stroke:0.45px #323130;transform:scaleX(1.0514);transform-origin:0 0;">Action</div>
<div class="r" style="left:291px;top:535px;width:1008px;height:1px;background:#e1dfdd;"></div>
<div class="t" style="left:301px;top:546.00px;font-size:13px;line-height:13px;color:#323130;transform:scaleX(0.9750);transform-origin:0 0;">100</div>
<div class="t" style="left:441px;top:546.00px;font-size:13px;line-height:13px;color:#323130;transform:scaleX(0.9779);transform-origin:0 0;">Microsoft.Sql-managedInstances_U...</div>
<div class="t" style="left:665px;top:546.00px;font-size:13px;line-height:13px;color:#323130;transform:scaleX(0.9750);transform-origin:0 0;">9000,9003,1438,144...</div>
<div class="t" style="left:805px;top:546.00px;font-size:13px;line-height:13px;color:#323130;transform:scaleX(0.9750);transform-origin:0 0;">TCP</div>
<div class="t" style="left:945px;top:546.00px;font-size:13px;line-height:13px;color:#323130;transform:scaleX(0.9750);transform-origin:0 0;">SqlManagement</div>
<div class="t" style="left:1085px;top:546.00px;font-size:13px;line-height:13px;color:#323130;transform:scaleX(0.9750);transform-origin:0 0;">10.0.0.0/24</div>
<svg class="r" style="left:1226px;top:547px" width="11" height="11" viewBox="0 0 11 11"><circle cx="5.5" cy="5.5" r="5.5" fill="#57a300"/><path d="M2.8 5.7 L4.7 7.6 L8.3 3.8" stroke="#fff" stroke-width="1.4" fill="none"/></svg>
<div class="t" style="left:1243px;top:546.00px;font-size:13px;line-height:13px;color:#323130;transform:scaleX(0.9750);transform-origin:0 0;">Allow</div>
<div class="r" style="left:291px;top:567px;width:1008px;height:1px;background:#c8c6c4;"></div>
<div class="t" style="left:301px;top:578.00px;font-size:13px;line-height:13px;color:#323130;transform:scaleX(0.9750);transform-origin:0 0;">101</div>
<div class="t" style="left:441px;top:578.00px;font-size:13px;line-height:13px;color:#323130;transform:scaleX(0.9779);transform-origin:0 0;">Microsoft.Sql-managedInstances_U...</div>
<div class="t" style="left:665px;top:578.00px;font-size:13px;line-height:13px;color:#323130;transform:scaleX(0.9750);transform-origin:0 0;">9000,9003,1440</div>
<div class="t" style="left:805px;top:578.00px;font-size:13px;line-height:13px;color:#323130;transform:scaleX(0.9750);transform-origin:0 0;">TCP</div>
<div class="t" style="left:945px;top:578.00px;font-size:13px;line-height:13px;color:#323130;transform:scaleX(0.9750);transform-origin:0 0;">CorpNetSaw</div>
<div class="t" style="left:1085px;top:578.00px;font-size:13px;line-height:13px;color:#323130;transform:scaleX(0.9750);transform-origin:0 0;">10.0.0.0/24</div>
<svg class="r" style="left:1226px;top:579px" width="11" height="11" viewBox="0 0 11 11"><circle cx="5.5" cy="5.5" r="5.5" fill="#57a300"/><path d="M2.8 5.7 L4.7 7.6 L8.3 3.8" stroke="#fff" stroke-width="1.4" fill="none"/></svg>
<div class="t" style="left:1243px;top:578.00px;font-size:13px;line-height:13px;color:#323130;transform:scaleX(0.9750);transform-origin:0 0;">Allow</div>
<div class="r" style="left:291px;top:599px;width:1008px;height:1px;background:#c8c6c4;"></div>
<div class="t" style="left:301px;top:610.00px;font-size:13px;line-height:13px;color:#323130;transform:scaleX(0.9750);transform-origin:0 0;">102</div>
<div class="t" style="left:441px;top:610.00px;font-size:13px;line-height:13px;color:#323130;transform:scaleX(0.9779);transform-origin:0 0;">Microsoft.Sql-managedInstances_U...</div>
<div class="t" style="left:665px;top:610.00px;font-size:13px;line-height:13px;color:#323130;transform:scaleX(0.9750);transform-origin:0 0;">9000,9003</div>
<div class="t" style="left:805px;top:610.00px;font-size:13px;line-height:13px;color:#323130;transform:scaleX(0.9750);transform-origin:0 0;">TCP</div>
<div class="t" style="left:945px;top:610.00px;font-size:13px;line-height:13px;color:#323130;transform:scaleX(0.9750);transform-origin:0 0;">CorpNetPublic</div>
<div class="t" style="left:1085px;top:610.00px;font-size:13px;line-height:13px;color:#323130;transform:scaleX(0.9750);transform-origin:0 0;">10.0.0.0/24</div>
<svg class="r" style="left:1226px;top:611px" width="11" height="11" viewBox="0 0 11 11"><circle cx="5.5" cy="5.5" r="5.5" fill="#57a300"/><path d="M2.8 5.7 L4.7 7.6 L8.3 3.8" stroke="#fff" stroke-width="1.4" fill="none"/></svg>
<div class="t" style="left:1243px;top:610.00px;font-size:13px;line-height:13px;color:#323130;transform:scaleX(0.9750);transform-origin:0 0;">Allow</div>
<div class="r" style="left:291px;top:631px;width:1008px;height:1px;background:#c8c6c4;"></div>
<div class="t" style="left:301px;top:642.00px;font-size:13px;line-height:13px;color:#323130;transform:scaleX(0.9750);transform-origin:0 0;">103</div>
<div class="t" style="left:441px;top:642.00px;font-size:13px;line-height:13px;color:#323130;transform:scaleX(0.9779);transform-origin:0 0;">Microsoft.Sql-managedInstances_U...</div>
<div class="t" style="left:665px;top:642.00px;font-size:13px;line-height:13px;color:#323130;transform:scaleX(0.9750);transform-origin:0 0;">Any</div>
<div class="t" style="left:805px;top:642.00px;font-size:13px;line-height:13px;color:#323130;transform:scaleX(0.9750);transform-origin:0 0;">Any</div>
<div class="t" style="left:945px;top:642.00px;font-size:13px;line-height:13px;color:#323130;transform:scaleX(0.9750);transform-origin:0 0;">AzureLoadBalancer</div>
<div class="t" style="left:1085px;top:642.00px;font-size:13px;line-height:13px;color:#323130;transform:scaleX(0.9750);transform-origin:0 0;">10.0.0.0/24</div>
<svg class="r" style="left:1226px;top:643px" width="11" height="11" viewBox="0 0 11 11"><circle cx="5.5" cy="5.5" r="5.5" fill="#57a300"/><path d="M2.8 5.7 L4.7 7.6 L8.3 3.8" stroke="#fff" stroke-width="1.4" fill="none"/></svg>
<div class="t" style="left:1243px;top:642.00px;font-size:13px;line-height:13px;color:#323130;transform:scaleX(0.9750);transform-origin:0 0;">Allow</div>
<div class="r" style="left:291px;top:663px;width:1008px;height:1px;background:#c8c6c4;"></div>
<div class="t" style="left:301px;top:674.00px;font-size:13px;line-height:13px;color:#323130;transform:scaleX(0.9750);transform-origin:0 0;">104</div>
<div class="t" style="left:441px;top:674.00px;font-size:13px;line-height:13px;color:#323130;transform:scaleX(0.9779);transform-origin:0 0;">Microsoft.Sql-managedInstances_U...</div>
<div class="t" style="left:665px;top:674.00px;font-size:13px;line-height:13px;color:#323130;transform:scaleX(0.9750);transform-origin:0 0;">Any</div>
<div class="t" style="left:805px;top:674.00px;font-size:13px;line-height:13px;color:#323130;transform:scaleX(0.9750);transform-origin:0 0;">Any</div>
<div class="t" style="left:945px;top:674.00px;font-size:13px;line-height:13px;color:#323130;transform:scaleX(0.9750);transform-origin:0 0;">10.0.0.0/24</div>
<div class="t" style="left:1085px;top:674.00px;font-size:13px;line-height:13px;color:#323130;transform:scaleX(0.9750);transform-origin:0 0;">10.0.0.0/24</div>
<svg class="r" style="left:1226px;top:675px" width="11" height="11" viewBox="0 0 11 11"><circle cx="5.5" cy="5.5" r="5.5" fill="#57a300"/><path d="M2.8 5.7 L4.7 7.6 L8.3 3.8" stroke="#fff" stroke-width="1.4" fill="none"/></svg>
<div class="t" style="left:1243px;top:674.00px;font-size:13px;line-height:13px;color:#323130;transform:scaleX(0.9750);transform-origin:0 0;">Allow</div>
<div class="r" style="left:291px;top:695px;width:1008px;height:1px;background:#c8c6c4;"></div>
<div class="t" style="left:301px;top:706.00px;font-size:13px;line-height:13px;color:#323130;transform:scaleX(0.9750);transform-origin:0 0;">1000</div>
<div class="t" style="left:441px;top:706.00px;font-size:13px;line-height:13px;color:#323130;transform:scaleX(0.9935);transform-origin:0 0;">allow_tds_inbound</div>
<div class="t" style="left:665px;top:706.00px;font-size:13px;line-height:13px;color:#323130;transform:scaleX(0.9750);transform-origin:0 0;">1433</div>
<div class="t" style="left:805px;top:706.00px;font-size:13px;line-height:13px;color:#323130;transform:scaleX(0.9750);transform-origin:0 0;">TCP</div>
<div class="t" style="left:945px;top:706.00px;font-size:13px;line-height:13px;color:#323130;transform:scaleX(0.9750);transform-origin:0 0;">VirtualNetwork</div>
<div class="t" style="left:1085px;top:706.00px;font-size:13px;line-height:13px;color:#323130;transform:scaleX(0.9750);transform-origin:0 0;">10.0.0.0/24</div>
<svg class="r" style="left:1226px;top:707px" width="11" height="11" viewBox="0 0 11 11"><circle cx="5.5" cy="5.5" r="5.5" fill="#57a300"/><path d="M2.8 5.7 L4.7 7.6 L8.3 3.8" stroke="#fff" stroke-width="1.4" fill="none"/></svg>
<div class="t" style="left:1243px;top:706.00px;font-size:13px;line-height:13px;color:#323130;transform:scaleX(0.9750);transform-origin:0 0;">Allow</div>
<div class="r" style="left:291px;top:727px;width:1008px;height:1px;background:#c8c6c4;"></div>
<div class="t" style="left:301px;top:738.00px;font-size:13px;line-height:13px;color:#323130;transform:scaleX(0.9750);transform-origin:0 0;">1100</div>
<div class="t" style="left:441px;top:738.00px;font-size:13px;line-height:13px;color:#323130;transform:scaleX(0.9985);transform-origin:0 0;">allow_redirect_inbound</div>
<div class="t" style="left:665px;top:738.00px;font-size:13px;line-height:13px;color:#323130;transform:scaleX(1.0107);transform-origin:0 0;">11000-11999</div>
<div class="t" style="left:805px;top:738.00px;font-size:13px;line-height:13px;color:#323130;transform:scaleX(0.9750);transform-origin:0 0;">TCP</div>
<div class="t" style="left:945px;top:738.00px;font-size:13px;line-height:13px;color:#323130;transform:scaleX(0.9750);transform-origin:0 0;">VirtualNetwork</div>
<div class="t" style="left:1085px;top:738.00px;font-size:13px;line-height:13px;color:#323130;transform:scaleX(0.9750);transform-origin:0 0;">10.0.0.0/24</div>
<svg class="r" style="left:1226px;top:739px" width="11" height="11" viewBox="0 0 11 11"><circle cx="5.5" cy="5.5" r="5.5" fill="#57a300"/><path d="M2.8 5.7 L4.7 7.6 L8.3 3.8" stroke="#fff" stroke-width="1.4" fill="none"/></svg>
<div class="t" style="left:1243px;top:738.00px;font-size:13px;line-height:13px;color:#323130;transform:scaleX(0.9750);transform-origin:0 0;">Allow</div>
<div class="r" style="left:291px;top:759px;width:1008px;height:1px;background:#c8c6c4;"></div>
<div class="t" style="left:301px;top:770.00px;font-size:13px;line-height:13px;color:#323130;transform:scaleX(0.9750);transform-origin:0 0;">1200</div>
<div class="t" style="left:441px;top:770.00px;font-size:13px;line-height:13px;color:#323130;">allow_geodr_inbound</div>
<div class="t" style="left:665px;top:770.00px;font-size:13px;line-height:13px;color:#323130;transform:scaleX(0.9750);transform-origin:0 0;">5022</div>
<div class="t" style="left:805px;top:770.00px;font-size:13px;line-height:13px;color:#323130;transform:scaleX(0.9750);transform-origin:0 0;">TCP</div>
<div class="t" style="left:945px;top:770.00px;font-size:13px;line-height:13px;color:#323130;transform:scaleX(0.9750);transform-origin:0 0;">VirtualNetwork</div>
<div class="t" style="left:1085px;top:770.00px;font-size:13px;line-height:13px;color:#323130;transform:scaleX(0.9750);transform-origin:0 0;">10.0.0.0/24</div>
<svg class="r" style="left:1226px;top:771px" width="11" height="11" viewBox="0 0 11 11"><circle cx="5.5" cy="5.5" r="5.5" fill="#57a300"/><path d="M2.8 5.7 L4.7 7.6 L8.3 3.8" stroke="#fff" stroke-width="1.4" fill="none"/></svg>
<div class="t" style="left:1243px;top:770.00px;font-size:13px;line-height:13px;color:#323130;transform:scaleX(0.9750);transform-origin:0 0;">Allow</div>
<div class="r" style="left:291px;top:791px;width:1008px;height:1px;background:#c8c6c4;"></div>
<div class="t" style="left:301px;top:802.00px;font-size:13px;line-height:13px;color:#323130;transform:scaleX(0.9750);transform-origin:0 0;">1300</div>
<div class="t" style="left:441px;top:802.00px;font-size:13px;line-height:13px;color:#323130;transform:scaleX(1.0133);transform-origin:0 0;">public_endpoint_inbound</div>
<div class="t" style="left:665px;top:802.00px;font-size:13px;line-height:13px;color:#323130;transform:scaleX(0.9750);transform-origin:0 0;">3342</div>
<div class="t" style="left:805px;top:802.00px;font-size:13px;line-height:13px;color:#323130;transform:scaleX(0.9750);transform-origin:0 0;">TCP</div>
<div class="t" style="left:945px;top:802.00px;font-size:13px;line-height:13px;color:#323130;transform:scaleX(0.9750);transform-origin:0 0;">Internet</div>
<div class="t" style="left:1085px;top:802.00px;font-size:13px;line-height:13px;color:#323130;transform:scaleX(0.9750);transform-origin:0 0;">10.0.0.0/24</div>
<svg class="r" style="left:1226px;top:803px" width="11" height="11" viewBox="0 0 11 11"><circle cx="5.5" cy="5.5" r="5.5" fill="#57a300"/><path d="M2.8 5.7 L4.7 7.6 L8.3 3.8" stroke="#fff" stroke-width="1.4" fill="none"/></svg>
<div class="t" style="left:1243px;top:802.00px;font-size:13px;line-height:13px;color:#323130;transform:scaleX(0.9750);transform-origin:0 0;">Allow</div>
<div class="r" style="left:291px;top:823px;width:1008px;height:1px;background:#c8c6c4;"></div>
<div class="t" style="left:301px;top:834.00px;font-size:13px;line-height:13px;color:#323130;transform:scaleX(0.9750);transform-origin:0 0;">4096</div>
<div class="t" style="left:441px;top:834.00px;font-size:13px;line-height:13px;color:#323130;transform:scaleX(0.9957);transform-origin:0 0;">deny_all_inbound</div>
<div class="t" style="left:665px;top:834.00px;font-size:13px;line-height:13px;color:#323130;transform:scaleX(0.9750);transform-origin:0 0;">Any</div>
<div class="t" style="left:805px;top:834.00px;font-size:13px;line-height:13px;color:#323130;transform:scaleX(0.9750);transform-origin:0 0;">Any</div>
<div class="t" style="left:945px;top:834.00px;font-size:13px;line-height:13px;color:#323130;transform:scaleX(0.9750);transform-origin:0 0;">Any</div>
<div class="t" style="left:1085px;top:834.00px;font-size:13px;line-height:13px;color:#323130;transform:scaleX(0.9750);transform-origin:0 0;">Any</div>
<svg class="r" style="left:1226px;top:835px" width="11" height="11" viewBox="0 0 11 11"><circle cx="5.5" cy="5.5" r="5.5" fill="#e00b1c"/><path d="M3.4 3.4 L7.6 7.6 M7.6 3.4 L3.4 7.6" stroke="#fff" stroke-width="1.3" fill="none"/></svg>
<div class="t" style="left:1243px;top:834.00px;font-size:13px;line-height:13px;color:#323130;transform:scaleX(0.9750);transform-origin:0 0;">Deny</div>
<div class="r" style="left:1324px;top:281px;width:17px;height:561px;background:#f1f1f1;"></div>
<div class="r" style="left:1326px;top:298px;width:13px;height:260px;background:#c1c1c1;"></div>
<svg class="r" style="left:1328px;top:288px" width="8" height="5" viewBox="0 0 8 5"><path d="M0 4.5 L4 0.5 L8 4.5 Z" fill="#a3a3a3"/></svg>
<svg class="r" style="left:1328px;top:830.5px" width="8" height="5" viewBox="0 0 8 5"><path d="M0 0.5 L4 4.5 L8 0.5 Z" fill="#505050"/></svg>
<div class="r" style="left:1px;top:842px;width:1340px;height:16px;background:#f1f1f1;"></div>
<div class="r" style="left:671px;top:844px;width:653px;height:13px;background:#c1c1c1;"></div>
<svg class="r" style="left:7px;top:847px" width="5" height="8" viewBox="0 0 5 8"><path d="M4.5 0 L0.5 4 L4.5 8 Z" fill="#505050"/></svg>
<svg class="r" style="left:1330.5px;top:847px" width="5" height="8" viewBox="0 0 5 8"><path d="M0.5 0 L4.5 4 L0.5 8 Z" fill="#a3a3a3"/></svg>
<div class="r" style="left:0px;top:0px;width:1342px;height:1px;background:#2e2e2e;"></div>
<div class="r" style="left:0px;top:0px;width:1px;height:860px;background:#4a4a40;"></div>
<div class="r" style="left:1341px;top:0px;width:1px;height:860px;background:#2e2e2e;"></div>
<div class="r" style="left:0px;top:858px;width:1342px;height:2px;background:#3a3a36;"></div>
</body></html>
